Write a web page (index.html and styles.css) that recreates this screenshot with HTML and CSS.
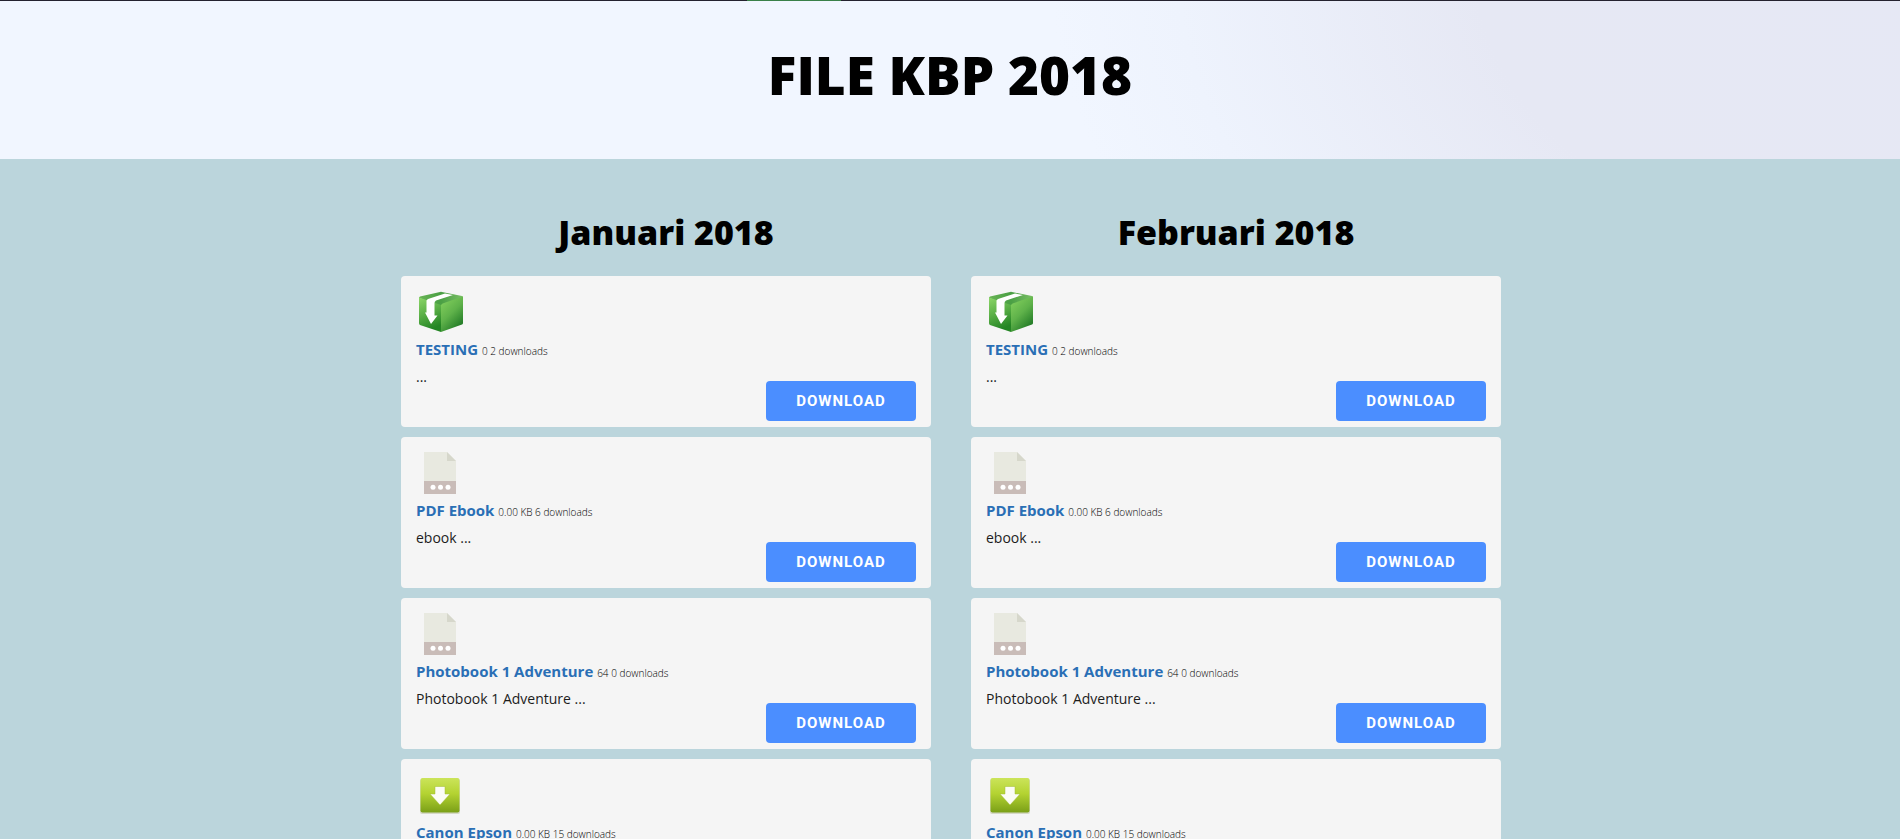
FILE: index.html
```
<!DOCTYPE html>
<html lang="id">
<head>
<meta charset="utf-8">
<meta name="viewport" content="width=device-width, initial-scale=1">
<title>File KBP 2018</title>
<link rel="stylesheet" href="styles.css">
</head>
<body>
<svg class="defs" aria-hidden="true">
  <defs>
    <linearGradient id="box-left" x1="0" y1="0" x2="0.3" y2="1"><stop offset="0" stop-color="#8cd668"/><stop offset="0.5" stop-color="#5bb047"/><stop offset="1" stop-color="#248524"/></linearGradient>
    <linearGradient id="box-right" x1="0" y1="0" x2="0.6" y2="1"><stop offset="0" stop-color="#88d460"/><stop offset="0.55" stop-color="#5fb24a"/><stop offset="1" stop-color="#237c27"/></linearGradient>
    <linearGradient id="box-top" x1="0" y1="0" x2="1" y2="0"><stop offset="0" stop-color="#68b455"/><stop offset="0.5" stop-color="#4a9f44"/><stop offset="1" stop-color="#79bf65"/></linearGradient>
    <linearGradient id="lime" x1="0" y1="0" x2="0" y2="1"><stop offset="0" stop-color="#cbe45a"/><stop offset="0.45" stop-color="#b4d332"/><stop offset="1" stop-color="#7a9f17"/></linearGradient>
    <symbol id="icon-box" viewBox="0 0 48 48">
      <path d="M3 7Q3 6 4 5.500L24 1Q25 0.700 26 1L46 5Q47 5.500 47 6L25 15Z" fill="url(#box-top)"/>
      <path d="M3 6.500 25 14V41L4 34Q3 33.500 3 32Z" fill="url(#box-left)"/>
      <path d="M25 14Q26 12.500 28 12L47 5.500V32Q47 33 46 33.500L25 41Z" fill="url(#box-right)"/>
      <path d="M10.500 9.500Q11 8.500 12 8L29 2.500 37 4 20 9.500Q18.500 10.500 18.500 12V24.500H21.500L15 33 9 21.500H10.500Z" fill="#fff"/>
    </symbol>
    <symbol id="icon-file" viewBox="0 0 48 48">
      <path d="M8 0H31L40 9V29H8Z" fill="#e8e9e0"/>
      <path d="M31 0 40 9H31Z" fill="#d6d7cb"/>
      <path d="M8 29H40V42H8Z" fill="#c9bcb8"/>
      <g fill="#fff"><circle cx="17" cy="35.300" r="2.500"/><circle cx="24.500" cy="35.300" r="2.500"/><circle cx="32" cy="35.300" r="2.500"/></g>
    </symbol>
    <symbol id="icon-arrow" viewBox="0 0 48 48">
      <rect x="4" y="5" width="40" height="35" rx="2" fill="#d5d8c6"/>
      <rect x="4.500" y="4" width="39" height="34.500" rx="2" fill="url(#lime)"/>
      <path d="M19 12.500H29V20H34L24 31 14 20H19Z" fill="#fbfcf5" stroke="#a0bd35" stroke-width="0.500"/>
    </symbol>
  </defs>
</svg>

<header class="banner">
  <div class="banner-marker"></div>
  <h1 class="banner-title">FILE KBP 2018</h1>
</header>

<main class="months">
  <section class="month">
    <h2 class="month-title">Januari 2018</h2>
    <article class="card">
      <svg class="card-icon" aria-hidden="true"><use href="#icon-box"/></svg>
      <h3 class="card-heading"><a class="card-link" href="#">TESTING</a> <small class="card-meta">0 2 downloads</small></h3>
      <p class="card-text">...</p>
      <button class="download" type="button">DOWNLOAD</button>
    </article>
    <article class="card">
      <svg class="card-icon" aria-hidden="true"><use href="#icon-file"/></svg>
      <h3 class="card-heading"><a class="card-link" href="#">PDF Ebook</a> <small class="card-meta">0.00 KB 6 downloads</small></h3>
      <p class="card-text">ebook ...</p>
      <button class="download" type="button">DOWNLOAD</button>
    </article>
    <article class="card">
      <svg class="card-icon" aria-hidden="true"><use href="#icon-file"/></svg>
      <h3 class="card-heading"><a class="card-link" href="#">Photobook 1 Adventure</a> <small class="card-meta">64 0 downloads</small></h3>
      <p class="card-text">Photobook 1 Adventure ...</p>
      <button class="download" type="button">DOWNLOAD</button>
    </article>
    <article class="card">
      <svg class="card-icon" aria-hidden="true"><use href="#icon-arrow"/></svg>
      <h3 class="card-heading"><a class="card-link" href="#">Canon Epson</a> <small class="card-meta">0.00 KB 15 downloads</small></h3>
      <p class="card-text">...</p>
      <button class="download" type="button">DOWNLOAD</button>
    </article>
  </section>

  <section class="month">
    <h2 class="month-title">Februari 2018</h2>
    <article class="card">
      <svg class="card-icon" aria-hidden="true"><use href="#icon-box"/></svg>
      <h3 class="card-heading"><a class="card-link" href="#">TESTING</a> <small class="card-meta">0 2 downloads</small></h3>
      <p class="card-text">...</p>
      <button class="download" type="button">DOWNLOAD</button>
    </article>
    <article class="card">
      <svg class="card-icon" aria-hidden="true"><use href="#icon-file"/></svg>
      <h3 class="card-heading"><a class="card-link" href="#">PDF Ebook</a> <small class="card-meta">0.00 KB 6 downloads</small></h3>
      <p class="card-text">ebook ...</p>
      <button class="download" type="button">DOWNLOAD</button>
    </article>
    <article class="card">
      <svg class="card-icon" aria-hidden="true"><use href="#icon-file"/></svg>
      <h3 class="card-heading"><a class="card-link" href="#">Photobook 1 Adventure</a> <small class="card-meta">64 0 downloads</small></h3>
      <p class="card-text">Photobook 1 Adventure ...</p>
      <button class="download" type="button">DOWNLOAD</button>
    </article>
    <article class="card">
      <svg class="card-icon" aria-hidden="true"><use href="#icon-arrow"/></svg>
      <h3 class="card-heading"><a class="card-link" href="#">Canon Epson</a> <small class="card-meta">0.00 KB 15 downloads</small></h3>
      <p class="card-text">...</p>
      <button class="download" type="button">DOWNLOAD</button>
    </article>
  </section>
</main>
</body>
</html>
```

FILE: styles.css
```
* {
  box-sizing: border-box;
}

html {
  scrollbar-width: none;
}

body {
  margin: 0;
  background: #bbd5dc;
  color: #1c1c1c;
  font-family: "Open Sans", "Noto Sans", sans-serif;
}

.defs {
  position: absolute;
  width: 0;
  height: 0;
}

.banner {
  position: relative;
  padding: 42px 20px 52px;
  border-top: 1px solid #24222f;
  background: radial-gradient(ellipse 850px 600px at 100% -25%, #e6e8f5 0%, #e6e8f4 50%, #eef3fd 85%, #f1f6ff 100%);
}

.banner-marker {
  position: absolute;
  top: -1px;
  left: 747px;
  width: 94px;
  height: 1px;
  background: #3a8049;
}

.banner-title {
  margin: 0;
  color: #000;
  font: 800 53px/64px "Open Sans", sans-serif;
  text-align: center;
}

.months {
  display: grid;
  grid-template-columns: repeat(auto-fit, minmax(320px, 1fr));
  gap: 40px;
  max-width: 1140px;
  margin: 0 auto;
  padding: 50px 19px 50px 21px;
}

.month {
  display: flex;
  flex-direction: column;
  gap: 10px;
}

.month-title {
  margin: 0 0 11px;
  color: #000;
  font: 800 34px/46px "Open Sans", sans-serif;
  text-align: center;
}

.card {
  display: flex;
  flex-direction: column;
  padding: 15px 15px 6px;
  border-radius: 4px;
  background: #f5f5f5;
}

.card-icon {
  width: 48px;
  height: 48px;
}

.card-heading {
  margin: 0;
  font-size: 15px;
  line-height: 20px;
}

.card-link {
  color: #2a6fb5;
  text-decoration: none;
}

.card-meta {
  color: #000;
  font-size: 10px;
  font-weight: 300;
  line-height: 10px;
}

.card-text {
  margin: 8px 0 0;
  font-size: 14px;
  line-height: 20px;
}

.download {
  align-self: flex-end;
  width: 150px;
  height: 40px;
  margin-top: -6px;
  border: 0;
  border-radius: 4px;
  background: #4b8eff;
  color: #fff;
  font: 700 15px/20px Roboto, sans-serif;
  letter-spacing: 1px;
  cursor: pointer;
}
```
